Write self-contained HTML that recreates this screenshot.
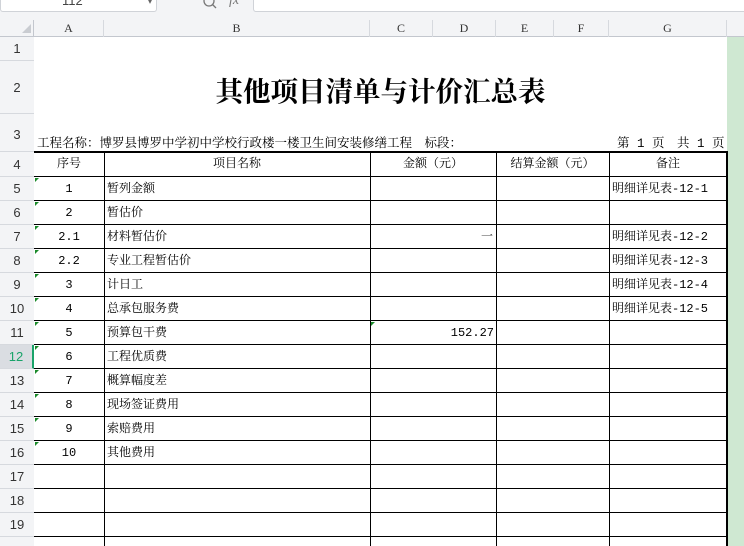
<!DOCTYPE html>
<html><head><meta charset="utf-8"><style>
*{margin:0;padding:0;box-sizing:border-box}
html,body{width:744px;height:546px;overflow:hidden}
body{background:#fff;position:relative;font-family:"Liberation Mono","Noto Serif CJK SC",serif;font-size:12px;color:#000}
.a{position:absolute}
.rh{position:absolute;left:0;width:34px;text-align:center;font-family:"Liberation Sans",sans-serif;font-size:13px;color:#333;border-bottom:1px solid #d6d9de;background:#f3f4f6}
.ch{position:absolute;top:20px;height:17px;line-height:17px;text-align:center;font-size:12px;color:#333;border-right:1px solid #d6d9de;font-family:"Liberation Serif",serif}
.hl{position:absolute;height:1px;background:#000}
.vl{position:absolute;width:1px;background:#000}
.t{position:absolute;height:24px;line-height:25px;white-space:nowrap}
.c{text-align:center}
.tri{position:absolute;width:0;height:0;border-top:4px solid #1a8a2a;border-right:4px solid transparent}
</style></head><body>
<div class="a" style="left:0;top:0;width:744px;height:37px;background:#f3f4f6"></div>
<div class="a" style="left:0;top:0;width:157px;height:12px;background:#fff;border:1px solid #d0d3d8;border-top:none;border-radius:0 0 3px 3px"></div>
<div class="a" style="left:62px;top:-7px;font-size:13px;color:#444;font-family:'Liberation Sans',sans-serif">112</div>
<div class="a" style="left:148px;top:-3px;font-size:8px;color:#666">▾</div>
<svg class="a" style="left:200px;top:0" width="20" height="12"><circle cx="9" cy="1" r="5" fill="none" stroke="#777" stroke-width="1.3"/><line x1="12.5" y1="4.5" x2="16" y2="8" stroke="#777" stroke-width="1.3"/></svg>
<div class="a" style="left:229px;top:-7px;font-size:14px;color:#777;font-style:italic;font-family:'Liberation Serif',serif">fx</div>
<div class="a" style="left:253px;top:0;width:491px;height:12px;background:#fff;border:1px solid #d0d3d8;border-top:none;border-right:none;border-radius:0 0 0 3px"></div>
<div class="a" style="left:0;top:36px;width:744px;height:1px;background:#c3c7ce"></div>
<div class="a" style="left:33px;top:20px;width:1px;height:526px;background:#c3c7ce"></div>
<div class="a" style="left:22px;top:24px;width:0;height:0;border-left:9px solid transparent;border-bottom:9px solid #c9ccd1"></div>
<div class="ch" style="left:34px;width:70px">A</div>
<div class="ch" style="left:104px;width:266px">B</div>
<div class="ch" style="left:370px;width:63px">C</div>
<div class="ch" style="left:433px;width:63px">D</div>
<div class="ch" style="left:496px;width:58px">E</div>
<div class="ch" style="left:554px;width:55px">F</div>
<div class="ch" style="left:609px;width:118px">G</div>
<div class="a" style="left:727px;top:37px;width:17px;height:509px;background:#cfe8d2"></div>

<div class="rh" style="top:37px;height:24px;line-height:24px">1</div>
<div class="rh" style="top:61px;height:53px;line-height:53px">2</div>
<div class="rh" style="top:114px;height:38px;line-height:42px">3</div>
<div class="rh" style="top:152px;height:25px;line-height:25px">4</div>
<div class="rh" style="top:177px;height:24px;line-height:24px">5</div>
<div class="rh" style="top:201px;height:24px;line-height:24px">6</div>
<div class="rh" style="top:225px;height:24px;line-height:24px">7</div>
<div class="rh" style="top:249px;height:24px;line-height:24px">8</div>
<div class="rh" style="top:273px;height:24px;line-height:24px">9</div>
<div class="rh" style="top:297px;height:24px;line-height:24px">10</div>
<div class="rh" style="top:321px;height:24px;line-height:24px">11</div>
<div class="rh" style="top:345px;height:24px;line-height:24px;background:#dadde2;color:#1aa36a;border-right:2px solid #1aa36a">12</div>
<div class="rh" style="top:369px;height:24px;line-height:24px">13</div>
<div class="rh" style="top:393px;height:24px;line-height:24px">14</div>
<div class="rh" style="top:417px;height:24px;line-height:24px">15</div>
<div class="rh" style="top:441px;height:24px;line-height:24px">16</div>
<div class="rh" style="top:465px;height:24px;line-height:24px">17</div>
<div class="rh" style="top:489px;height:24px;line-height:24px">18</div>
<div class="rh" style="top:513px;height:24px;line-height:24px">19</div>
<div class="rh" style="top:537px;height:9px;line-height:24px;border-bottom:none"></div>

<div class="a" style="left:34px;top:71px;width:693px;text-align:center;font-size:27.5px;font-weight:bold;line-height:36px;font-family:'Noto Serif CJK SC',serif">其他项目清单与计价汇总表</div>
<div class="a" style="left:37px;top:136px;font-size:12.5px;line-height:16px;white-space:nowrap">工程名称：博罗县博罗中学初中学校行政楼一楼卫生间安装修缮工程　标段：</div>
<div class="a" style="left:617px;top:136px;font-size:12.5px;line-height:16px;white-space:nowrap">第 1 页　共 1 页</div>

<div class="hl" style="left:34px;top:151px;width:694px;height:2px"></div>
<div class="hl" style="left:34px;top:176px;width:694px"></div>
<div class="hl" style="left:34px;top:200px;width:694px"></div>
<div class="hl" style="left:34px;top:224px;width:694px"></div>
<div class="hl" style="left:34px;top:248px;width:694px"></div>
<div class="hl" style="left:34px;top:272px;width:694px"></div>
<div class="hl" style="left:34px;top:296px;width:694px"></div>
<div class="hl" style="left:34px;top:320px;width:694px"></div>
<div class="hl" style="left:34px;top:344px;width:694px"></div>
<div class="hl" style="left:34px;top:368px;width:694px"></div>
<div class="hl" style="left:34px;top:392px;width:694px"></div>
<div class="hl" style="left:34px;top:416px;width:694px"></div>
<div class="hl" style="left:34px;top:440px;width:694px"></div>
<div class="hl" style="left:34px;top:464px;width:694px"></div>
<div class="hl" style="left:34px;top:488px;width:694px"></div>
<div class="hl" style="left:34px;top:512px;width:694px"></div>
<div class="hl" style="left:34px;top:536px;width:694px"></div>
<div class="vl" style="left:104px;top:152px;height:394px"></div>
<div class="vl" style="left:370px;top:152px;height:394px"></div>
<div class="vl" style="left:496px;top:152px;height:394px"></div>
<div class="vl" style="left:609px;top:152px;height:394px"></div>
<div class="vl" style="left:726px;top:152px;height:394px;width:2px"></div>

<div class="t c" style="left:34px;top:152px;width:70px">序号</div>
<div class="t c" style="left:104px;top:152px;width:266px">项目名称</div>
<div class="t c" style="left:370px;top:152px;width:126px">金额（元）</div>
<div class="t c" style="left:496px;top:152px;width:113px">结算金额（元）</div>
<div class="t c" style="left:609px;top:152px;width:118px">备注</div>

<div class="t c" style="left:34px;top:177px;width:70px">1</div><div class="t" style="left:107px;top:177px">暂列金额</div><div class="t" style="left:612px;top:177px">明细详见表-12-1</div>
<div class="t c" style="left:34px;top:201px;width:70px">2</div><div class="t" style="left:107px;top:201px">暂估价</div>
<div class="t c" style="left:34px;top:225px;width:70px">2.1</div><div class="t" style="left:107px;top:225px">材料暂估价</div><div class="t" style="left:481px;top:225px">一</div><div class="t" style="left:612px;top:225px">明细详见表-12-2</div>
<div class="t c" style="left:34px;top:249px;width:70px">2.2</div><div class="t" style="left:107px;top:249px">专业工程暂估价</div><div class="t" style="left:612px;top:249px">明细详见表-12-3</div>
<div class="t c" style="left:34px;top:273px;width:70px">3</div><div class="t" style="left:107px;top:273px">计日工</div><div class="t" style="left:612px;top:273px">明细详见表-12-4</div>
<div class="t c" style="left:34px;top:297px;width:70px">4</div><div class="t" style="left:107px;top:297px">总承包服务费</div><div class="t" style="left:612px;top:297px">明细详见表-12-5</div>
<div class="t c" style="left:34px;top:321px;width:70px">5</div><div class="t" style="left:107px;top:321px">预算包干费</div><div class="t" style="left:370px;top:321px;width:124px;text-align:right">152.27</div>
<div class="t c" style="left:34px;top:345px;width:70px">6</div><div class="t" style="left:107px;top:345px">工程优质费</div>
<div class="t c" style="left:34px;top:369px;width:70px">7</div><div class="t" style="left:107px;top:369px">概算幅度差</div>
<div class="t c" style="left:34px;top:393px;width:70px">8</div><div class="t" style="left:107px;top:393px">现场签证费用</div>
<div class="t c" style="left:34px;top:417px;width:70px">9</div><div class="t" style="left:107px;top:417px">索赔费用</div>
<div class="t c" style="left:34px;top:441px;width:70px">10</div><div class="t" style="left:107px;top:441px">其他费用</div>

<div class="tri" style="left:35px;top:178px"></div>
<div class="tri" style="left:35px;top:202px"></div>
<div class="tri" style="left:35px;top:226px"></div>
<div class="tri" style="left:35px;top:250px"></div>
<div class="tri" style="left:35px;top:274px"></div>
<div class="tri" style="left:35px;top:298px"></div>
<div class="tri" style="left:35px;top:322px"></div>
<div class="tri" style="left:35px;top:346px"></div>
<div class="tri" style="left:35px;top:370px"></div>
<div class="tri" style="left:35px;top:394px"></div>
<div class="tri" style="left:35px;top:418px"></div>
<div class="tri" style="left:35px;top:442px"></div>
<div class="tri" style="left:371px;top:322px"></div>
</body></html>
